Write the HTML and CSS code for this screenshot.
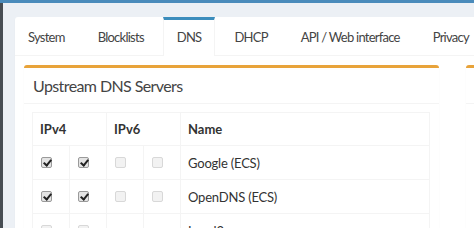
FILE: index.html
```html
<!DOCTYPE html>
<html lang="en">

<head>
    <meta charset="UTF-8">
    <meta name="viewport" content="width=device-width, initial-scale=1.0">
    <title>Settings</title>

    <link rel="stylesheet" href="styles.css">
</head>

<body>
    <div class="main-header"></div>
    <div class="wrapper">
        <aside class="main-sidebar"></aside>
        <section class="content">
            <div class="nav-tabs-custom">
                <ul class="nav-tabs">
                    <li><a href="#">System</a></li>
                    <li><a href="#">Blocklists</a></li>
                    <li class="active"><a href="#">DNS</a></li>
                    <li><a href="#">DHCP</a></li>
                    <li><a href="#">API / Web interface</a></li>
                    <li><a href="#">Privacy</a></li>
                </ul>
                <div class="tab-content">
                    <div class="row">
                        <!-- 上游DNS -->
                        <div class="box box-warning">
                            <div class="box-header">
                                <h3 class="box-title">Upstream DNS Servers</h3>
                            </div>
                            <div class="box-body">
                                <table class="table-bordered">
                                    <tr class="head">
                                        <th colspan="2">IPv4</th>
                                        <th colspan="2">IPv6</th>
                                        <th>Name</th>
                                    </tr>
                                    <tr>
                                        <td class="cb"><span class="check checked"></span></td>
                                        <td class="cb"><span class="check checked"></span></td>
                                        <td class="cb"><span class="check"></span></td>
                                        <td class="cb"><span class="check"></span></td>
                                        <td>Google (ECS)</td>
                                    </tr>
                                    <tr>
                                        <td class="cb"><span class="check checked"></span></td>
                                        <td class="cb"><span class="check checked"></span></td>
                                        <td class="cb"><span class="check"></span></td>
                                        <td class="cb"><span class="check"></span></td>
                                        <td>OpenDNS (ECS)</td>
                                    </tr>
                                    <tr>
                                        <td class="cb"><span class="check"></span></td>
                                        <td class="cb"><span class="check"></span></td>
                                        <td class="cb"></td>
                                        <td class="cb"></td>
                                        <td>Level3</td>
                                    </tr>
                                </table>
                            </div>
                        </div>
                        <!-- 右侧 -->
                        <div class="box box-warning">
                            <div class="box-header"></div>
                        </div>
                    </div>
                </div>
            </div>
        </section>
    </div>
</body>

</html>
```

FILE: styles.css
```css
* {
    box-sizing: border-box;
}

body {
    margin: 0;
    height: 228px;
    overflow: hidden;
    background: #ecf0f5;
    font-family: Lato, "Liberation Sans", sans-serif;
    font-size: 13px;
    color: #333;
}

.main-header {
    height: 3px;
    background: #4a8bbb;
}

.wrapper {
    display: flex;
}

.main-sidebar {
    width: 3px;
    flex-shrink: 0;
    height: 225px;
    background: #474d53;
}

.content {
    padding: 14px 0 0 12px;
    flex-shrink: 0;
}

.nav-tabs-custom {
    width: 720px;
    background: #fff;
    box-shadow: 0 1px 1px rgba(0, 0, 0, 0.1);
    border-radius: 3px;
}

.nav-tabs {
    margin: 0;
    padding: 0;
    list-style: none;
    display: flex;
    border-bottom: 1px solid #f4f4f4;
}

.nav-tabs li {
    margin-right: 5px;
    border-top: 3px solid transparent;
    border-left: 1px solid transparent;
    border-right: 1px solid transparent;
    margin-bottom: -1px;
}

.nav-tabs li:first-child {
    margin-left: -1px;
}

.nav-tabs li a {
    display: block;
    padding: 9px 13px 10px;
    line-height: 17px;
    color: #444;
    text-decoration: none;
    letter-spacing: -0.75px;
}

.nav-tabs li.active {
    border-top-color: #3c8dbc;
    border-left-color: #f4f4f4;
    border-right-color: #f4f4f4;
    background: #fff;
}

.tab-content {
    padding: 9px 9px;
}

.row {
    display: flex;
    gap: 27px;
}

.box {
    width: 415px;
    flex-shrink: 0;
    background: #fff;
    border-top: 3px solid #e8a33a;
    border-radius: 3px;
    box-shadow: 0 1px 1px rgba(0, 0, 0, 0.1);
}

.box-header {
    height: 36px;
    padding: 8px 10px 8px 9px;
    border-bottom: 1px solid #f4f4f4;
}

.box-title {
    margin: 0;
    font-size: 16px;
    font-weight: normal;
    line-height: 19px;
    color: #444;
    letter-spacing: -0.6px;
}

.box-body {
    padding: 8px 9px 10px 8px;
}

.table-bordered {
    width: 398px;
    border-collapse: collapse;
}

.table-bordered th,
.table-bordered td {
    border: 1px solid #f4f4f4;
    padding: 0 7px;
    text-align: left;
    height: 34px;
    vertical-align: middle;
}

.table-bordered td {
    letter-spacing: -0.2px;
}

.table-bordered th {
    height: 33px;
    font-weight: bold;
    color: #333;
}

.table-bordered td.cb {
    width: 37px;
    padding: 0 8px;
}

.check {
    display: block;
    width: 11px;
    height: 11px;
    border: 1px solid #d8d8d8;
    border-radius: 2px;
    background: #f2f2f2;
}

/* 勾选状态 */
.check.checked {
    position: relative;
    border-color: #9a9a9a;
    background: #e4e4e4;
}

.check.checked::after {
    content: "";
    position: absolute;
    left: 3px;
    top: 0;
    width: 3px;
    height: 6px;
    border: solid #222;
    border-width: 0 2px 2px 0;
    transform: rotate(40deg);
}
```
